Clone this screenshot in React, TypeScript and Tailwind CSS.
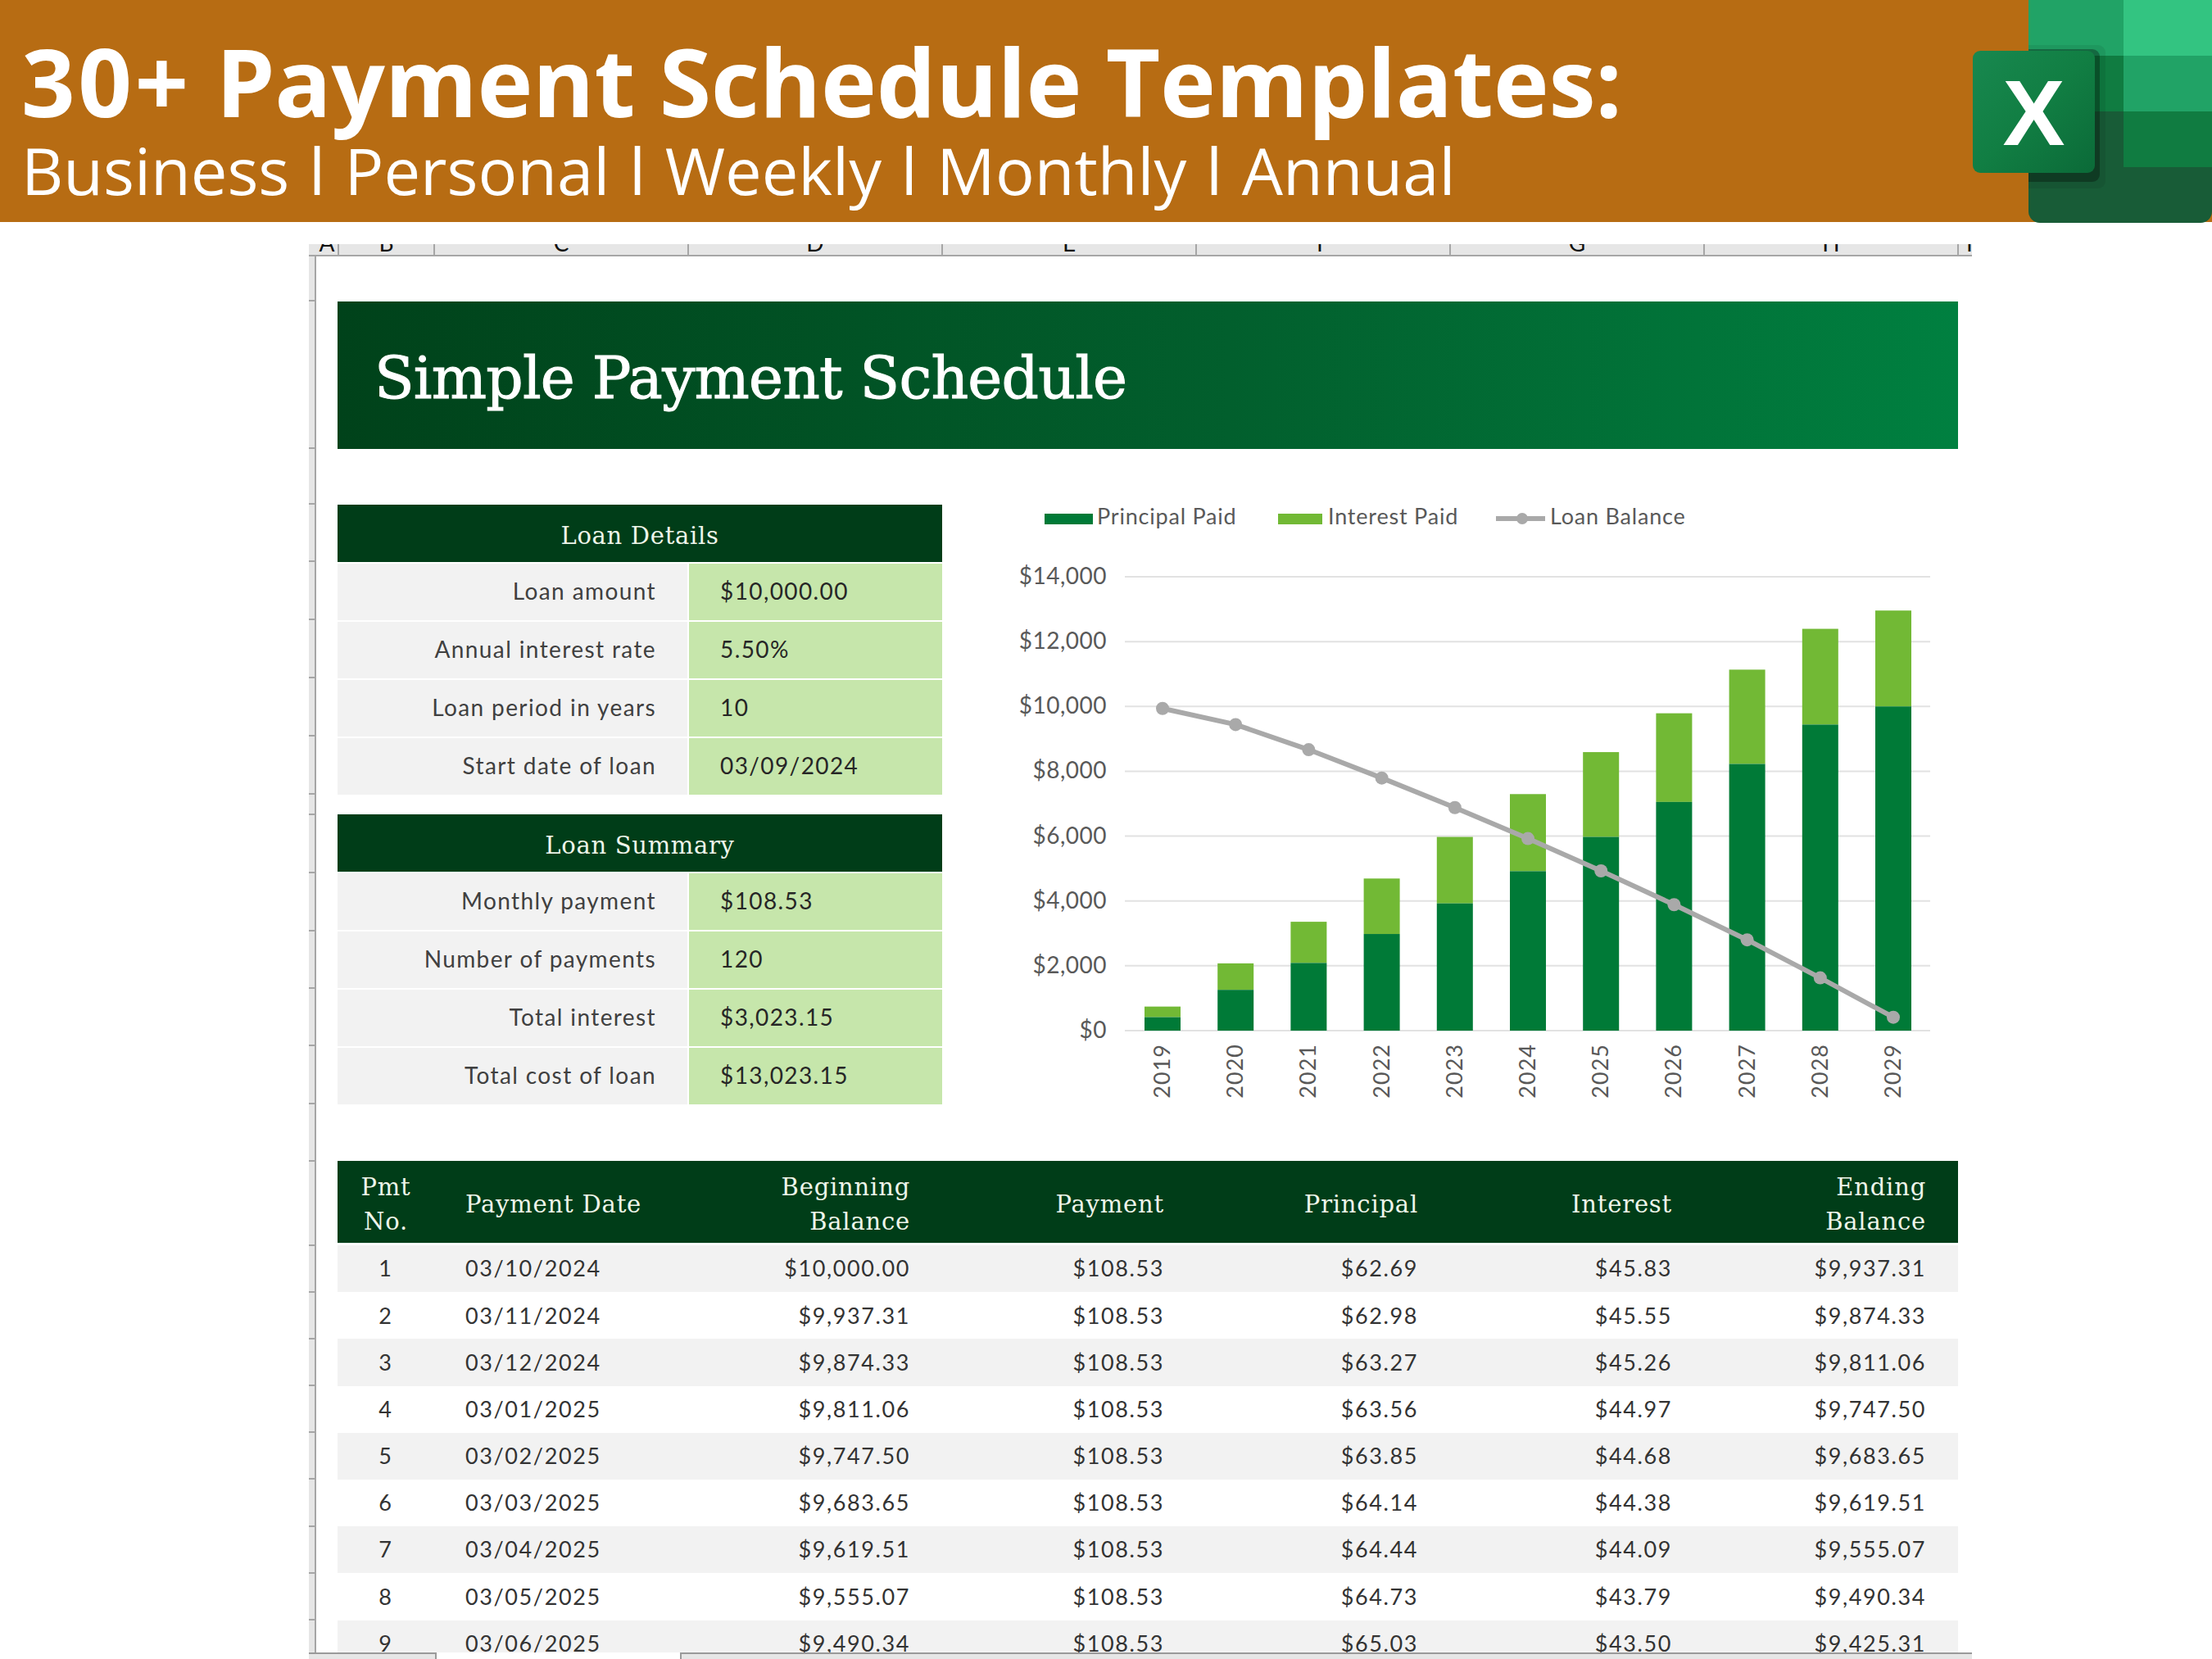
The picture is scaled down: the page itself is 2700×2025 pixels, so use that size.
import React from "react"

const colLetters = [
  { l: "A", w: "w-[28px]" },
  { l: "B", w: "w-[117px]" },
  { l: "C", w: "w-[310px]" },
  { l: "D", w: "w-[310px]" },
  { l: "E", w: "w-[310px]" },
  { l: "F", w: "w-[310px]" },
  { l: "G", w: "w-[310px]" },
  { l: "H", w: "w-[310px]" },
  { l: "I", w: "w-[28px]" },
]

const tickHeights = [55, 180, 68, 70, 71, 71, 71, 71, 25, 71, 71, 70, 70, 71, 70, 103, 57, 57, 57, 57, 57, 58, 57, 57, 57]

const loanDetails = [
  ["Loan amount", "$10,000.00"],
  ["Annual interest rate", "5.50%"],
  ["Loan period in years", "10"],
  ["Start date of loan", "03/09/2024"],
]

const loanSummary = [
  ["Monthly payment", "$108.53"],
  ["Number of payments", "120"],
  ["Total interest", "$3,023.15"],
  ["Total cost of loan", "$13,023.15"],
]

const rows = [
  ["1", "03/10/2024", "$10,000.00", "$108.53", "$62.69", "$45.83", "$9,937.31"],
  ["2", "03/11/2024", "$9,937.31", "$108.53", "$62.98", "$45.55", "$9,874.33"],
  ["3", "03/12/2024", "$9,874.33", "$108.53", "$63.27", "$45.26", "$9,811.06"],
  ["4", "03/01/2025", "$9,811.06", "$108.53", "$63.56", "$44.97", "$9,747.50"],
  ["5", "03/02/2025", "$9,747.50", "$108.53", "$63.85", "$44.68", "$9,683.65"],
  ["6", "03/03/2025", "$9,683.65", "$108.53", "$64.14", "$44.38", "$9,619.51"],
  ["7", "03/04/2025", "$9,619.51", "$108.53", "$64.44", "$44.09", "$9,555.07"],
  ["8", "03/05/2025", "$9,555.07", "$108.53", "$64.73", "$43.79", "$9,490.34"],
  ["9", "03/06/2025", "$9,490.34", "$108.53", "$65.03", "$43.50", "$9,425.31"],
]

const years = [
  { y: 2019, p: 415, t: 742, b: 9937 },
  { y: 2020, p: 1258, t: 2075, b: 9441 },
  { y: 2021, p: 2088, t: 3358, b: 8666 },
  { y: 2022, p: 2981, t: 4692, b: 7792 },
  { y: 2023, p: 3925, t: 5975, b: 6880 },
  { y: 2024, p: 4918, t: 7296, b: 5925 },
  { y: 2025, p: 5975, t: 8591, b: 4927 },
  { y: 2026, p: 7054, t: 9789, b: 3886 },
  { y: 2027, p: 8226, t: 11135, b: 2800 },
  { y: 2028, p: 9441, t: 12394, b: 1628 },
  { y: 2029, p: 10000, t: 12958, b: 412 },
]

// chart svg origin is 1150,600 on the page
const zeroY = 658
const valueY = (v: number) => zeroY - (v / 14000) * 554
const barX = (i: number) => 269 + i * 89.2

function ExcelLogo() {
  return (
    <svg width="292" height="272" viewBox="0 0 292 272" className="shrink-0">
      <defs>
        <clipPath id="body">
          <rect x="68" y="-14" width="224" height="286" rx="14" />
        </clipPath>
        <linearGradient id="tile" x1="0" y1="0" x2="1" y2="1">
          <stop offset="0" stopColor="#18884f" />
          <stop offset="0.5" stopColor="#117e43" />
          <stop offset="1" stopColor="#0b6a38" />
        </linearGradient>
      </defs>
      <g clipPath="url(#body)">
        <rect x="68" y="0" width="116" height="68" fill="#21a366" />
        <rect x="184" y="0" width="108" height="68" fill="#33c481" />
        <rect x="68" y="68" width="116" height="68" fill="#107c41" />
        <rect x="184" y="68" width="108" height="68" fill="#21a366" />
        <rect x="68" y="136" width="116" height="68" fill="#185c37" />
        <rect x="184" y="136" width="108" height="68" fill="#107c41" />
        <rect x="68" y="204" width="224" height="68" fill="#185c37" />
        <rect x="60" y="55" width="102" height="175" rx="9" fill="#000" opacity="0.07" />
        <rect x="60" y="60" width="95" height="162" rx="9" fill="#000" opacity="0.3" />
      </g>
      <rect x="0" y="62" width="149" height="149" rx="9" fill="url(#tile)" />
      <text x="74.5" y="177" textAnchor="middle" fill="#fff" fontSize="114" fontWeight="700" fontFamily="'Liberation Sans', sans-serif">
        X
      </text>
    </svg>
  )
}

function DetailTable({ title, items }: { title: string; items: string[][] }) {
  return (
    <div className="flex flex-col">
      <div className="h-[70px] bg-[#003d18] flex items-center justify-center pt-[7px] text-[#eef5ea] text-[29px] font-['DejaVu_Serif',serif] tracking-[0.7px]">
        {title}
      </div>
      <div className="flex flex-col">
        {items.map(([label, value]) => (
          <div key={label} className="flex h-[71px] pt-[2px] text-[28px] tracking-[1.4px]">
            <div className="w-[427px] bg-[#f2f2f2] flex items-center justify-end pb-[3px] pr-[38px] text-[#404040]">{label}</div>
            <div className="w-[2px] bg-white" />
            <div className="flex-1 bg-[#c6e6ab] flex items-center pb-[3px] pl-[38px] text-[#262626]">{value}</div>
          </div>
        ))}
      </div>
    </div>
  )
}

function PaymentChart() {
  return (
    <svg width="1240" height="760" viewBox="0 0 1240 760" className="font-['Lato',sans-serif]">
      <rect x="125" y="27" width="59" height="13" fill="#007a37" />
      <text x="189" y="40" fontSize="27" fill="#595959" letterSpacing="0.8">Principal Paid</text>
      <rect x="410" y="27" width="54" height="13" fill="#72b935" />
      <text x="471" y="40" fontSize="27" fill="#595959" letterSpacing="0.8">Interest Paid</text>
      <line x1="676" y1="33" x2="736" y2="33" stroke="#a9a9a9" strokeWidth="6" />
      <circle cx="708" cy="33" r="7" fill="#a9a9a9" />
      <text x="742" y="40" fontSize="27" fill="#595959" letterSpacing="0.8">Loan Balance</text>

      {[0, 2000, 4000, 6000, 8000, 10000, 12000, 14000].map((v) => (
        <g key={v}>
          <line x1="223" x2="1206" y1={valueY(v)} y2={valueY(v)} stroke="#e2e2e2" strokeWidth="2" />
          <text x="201" y={valueY(v) + 9} textAnchor="end" fontSize="28" fill="#595959" letterSpacing="0.5">
            {"$" + v.toLocaleString("en-US")}
          </text>
        </g>
      ))}

      {years.map((d, i) => (
        <g key={d.y}>
          <rect x={barX(i) - 22} y={valueY(d.t)} width="44" height={valueY(d.p) - valueY(d.t)} fill="#72b935" />
          <rect x={barX(i) - 22} y={valueY(d.p)} width="44" height={zeroY - valueY(d.p)} fill="#007a37" />
          <text
            transform={`translate(${barX(i) + 9} 674) rotate(-90)`}
            textAnchor="end"
            fontSize="27"
            fill="#595959"
            letterSpacing="1"
          >
            {d.y}
          </text>
        </g>
      ))}

      <polyline
        points={years.map((d, i) => `${barX(i)},${valueY(d.b)}`).join(" ")}
        fill="none"
        stroke="#a9a9a9"
        strokeWidth="6"
      />
      {years.map((d, i) => (
        <circle key={d.y} cx={barX(i)} cy={valueY(d.b)} r="8" fill="#a9a9a9" />
      ))}
    </svg>
  )
}

export default function App() {
  return (
    <div className="w-[2700px] h-[2025px] flex flex-col bg-white overflow-hidden font-['Lato',sans-serif]">
      <header className="h-[271px] shrink-0 bg-[#b76c13] flex items-stretch">
        <div className="pl-[26px] pt-[34px] flex flex-col text-white font-['Open_Sans',sans-serif] whitespace-nowrap">
          <div className="text-[115px] font-bold leading-[130px] tracking-[-0.25px]">
            <span className="tracking-[3.5px]">30+</span> Payment Schedule Templates:
          </div>
          <div className="text-[79.5px] leading-[90px] mt-[-2px] [word-spacing:3px]">Business l Personal l Weekly l Monthly l Annual</div>
        </div>
        <div className="ml-auto">
          <ExcelLogo />
        </div>
      </header>

      <div className="mt-[27px] ml-[377px] w-[2030px] flex-1 min-h-0 flex flex-col">
        {/* column letters, cut off at the top like the original crop */}
        <div className="h-[15px] shrink-0 flex pl-[9px] bg-[#e6e6e6] border-b-[2px] border-[#a6a6a6] overflow-hidden text-[28px] text-[#111]">
          {colLetters.map((c) => (
            <div key={c.l} className={`${c.w} shrink-0 h-full border-r-[2px] border-[#a6a6a6] flex items-end justify-center leading-[28px]`}>
              <span className="mb-[1px]">{c.l}</span>
            </div>
          ))}
        </div>

        <div className="flex-1 min-h-0 flex overflow-hidden">
          <div className="w-[9px] shrink-0 flex flex-col border-r-[2px] border-[#a6a6a6] bg-[#e6e6e6]">
            {tickHeights.map((h, i) => (
              <div key={i} className="shrink-0 border-b-[2px] border-[#a6a6a6]" style={{ height: h }} />
            ))}
          </div>

          <main className="flex-1 pl-[26px] pr-[17px] pt-[55px] flex flex-col">
            <div className="h-[180px] shrink-0 bg-gradient-to-r from-[#00421a] via-[#025f2d] via-55% to-[#008040] flex items-center pl-[45px] pt-[8px] text-white text-[71px] font-['DejaVu_Serif',serif] tracking-[-0.8px] [-webkit-text-stroke:1px_white]">
              Simple Payment Schedule
            </div>

            <div className="mt-[68px] flex h-[801px] shrink-0">
              <div className="w-[738px] shrink-0 flex flex-col gap-[24px]">
                <DetailTable title="Loan Details" items={loanDetails} />
                <DetailTable title="Loan Summary" items={loanSummary} />
              </div>
              <div className="mt-[-16px]">
                <PaymentChart />
              </div>
            </div>

            <div className="h-[100px] shrink-0 bg-[#003d18] flex items-center pt-[5px] text-[#eef5ea] text-[29px] leading-[42px] font-['DejaVu_Serif',serif] tracking-[0.8px]">
              <div className="w-[118px] text-center">Pmt<br />No.</div>
              <div className="w-[310px] pl-[38px]">Payment Date</div>
              <div className="w-[310px] pr-[39px] text-right">Beginning<br />Balance</div>
              <div className="w-[310px] pr-[39px] text-right">Payment</div>
              <div className="w-[310px] pr-[39px] text-right">Principal</div>
              <div className="w-[310px] pr-[39px] text-right">Interest</div>
              <div className="w-[310px] pr-[39px] text-right">Ending<br />Balance</div>
            </div>

            <div className="mt-[3px] flex flex-col shrink-0 text-[27px] tracking-[1.6px] text-[#333]">
              {rows.map((r, i) => (
                <div key={r[0]} className={`h-[57.2px] flex items-center ${i % 2 === 0 ? "bg-[#f2f2f2]" : "bg-white"}`}>
                  <div className="w-[118px] text-center">{r[0]}</div>
                  <div className="w-[310px] pl-[38px]">{r[1]}</div>
                  <div className="w-[310px] pr-[39px] text-right">{r[2]}</div>
                  <div className="w-[310px] pr-[39px] text-right">{r[3]}</div>
                  <div className="w-[310px] pr-[39px] text-right">{r[4]}</div>
                  <div className="w-[310px] pr-[39px] text-right">{r[5]}</div>
                  <div className="w-[310px] pr-[39px] text-right">{r[6]}</div>
                </div>
              ))}
            </div>
          </main>
        </div>

        <div className="h-[8px] shrink-0 flex bg-[#e6e6e6] border-t-[2px] border-[#9a9a9a]">
          <div className="w-[156px] shrink-0 border-r-[2px] border-[#9a9a9a]" />
          <div className="w-[297px] shrink-0 bg-white mt-[-2px]" />
          <div className="flex-1 border-l-[2px] border-[#9a9a9a]" />
        </div>
      </div>
    </div>
  )
}
